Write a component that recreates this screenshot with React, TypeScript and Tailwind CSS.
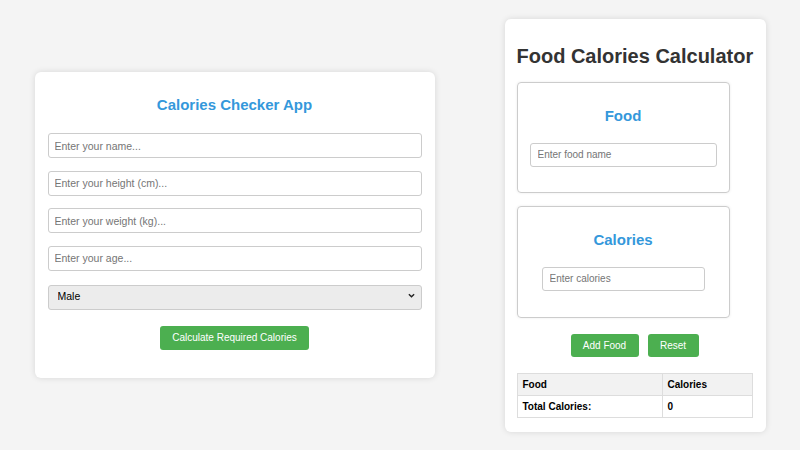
const App = () => {
  return (
    <div className="min-h-screen w-full bg-[#f4f4f4] flex items-center justify-center gap-[70px] font-['Liberation_Sans',Arial,sans-serif]">
      <div className="w-[400px] bg-white rounded-[6px] shadow-[0_0_6px_rgba(0,0,0,0.12)] px-[13px] pt-[22px] pb-[28px]">
        <h1 className="text-center text-[15px] font-bold text-[#3498db] leading-[22px]">Calories Checker App</h1>
        <div className="mt-[17px] flex flex-col gap-[12.5px]">
          {["Enter your name...", "Enter your height (cm)...", "Enter your weight (kg)...", "Enter your age..."].map((p) => (
            <input
              key={p}
              placeholder={p}
              className="w-full h-[25px] px-[6px] text-[10.5px] text-[#333] placeholder:text-[#757575] bg-white border border-[#ccc] rounded-[3px] outline-none"
            />
          ))}
          <div className="relative">
            <select className="w-full h-[25px] pl-[9px] text-[10.5px] text-black bg-[#ececec] border border-[#ccc] rounded-[3px] appearance-none outline-none">
              <option>Male</option>
              <option>Female</option>
            </select>
            <svg className="absolute right-[7px] top-[10px] w-[7px] h-[5px]" viewBox="0 0 8 5">
              <path d="M1 1l3 3 3-3" fill="none" stroke="#222" strokeWidth="1.6" />
            </svg>
          </div>
        </div>
        <div className="mt-[16px] flex justify-center">
          <button className="h-[24px] w-[149px] bg-[#4caf50] text-white text-[10px] rounded-[3px]">Calculate Required Calories</button>
        </div>
      </div>

      <div className="w-[261px] bg-white rounded-[6px] shadow-[0_0_6px_rgba(0,0,0,0.12)] pl-[12px] pr-[13px] pt-[24px] pb-[14px]">
        <h1 className="text-[20px] font-bold text-[#333] leading-[26px] whitespace-nowrap">Food Calories Calculator</h1>
        <div className="mt-[13px] w-[213px] h-[111px] border border-[#ccc] rounded-[4px] shadow-[0_0_3px_rgba(0,0,0,0.08)] flex flex-col items-center pt-[23px]">
          <h2 className="text-[15px] font-bold text-[#3498db] leading-[20px]">Food</h2>
          <input
            placeholder="Enter food name"
            className="mt-[17px] w-[187px] h-[24px] px-[7px] text-[10px] placeholder:text-[#757575] border border-[#ccc] rounded-[3px] outline-none"
          />
        </div>
        <div className="mt-[13px] w-[213px] h-[112px] border border-[#ccc] rounded-[4px] shadow-[0_0_3px_rgba(0,0,0,0.08)] flex flex-col items-center pt-[23px]">
          <h2 className="text-[15px] font-bold text-[#3498db] leading-[20px]">Calories</h2>
          <input
            placeholder="Enter calories"
            className="mt-[17px] w-[163px] h-[24px] px-[7px] text-[10px] placeholder:text-[#757575] border border-[#ccc] rounded-[3px] outline-none"
          />
        </div>
        <div className="mt-[16px] flex justify-center gap-[9px] w-[236px]">
          <button className="h-[23px] w-[68px] bg-[#4caf50] text-white text-[10px] rounded-[3px]">Add Food</button>
          <button className="h-[23px] w-[51px] bg-[#4caf50] text-white text-[10px] rounded-[3px]">Reset</button>
        </div>
        <table className="mt-[16px] w-[236px] border-collapse text-[10px] font-bold text-black">
          <thead>
            <tr className="bg-[#f2f2f2]">
              <th className="h-[22px] w-[145px] border border-[#ddd] px-[5px] text-left">Food</th>
              <th className="h-[22px] border border-[#ddd] px-[5px] text-left">Calories</th>
            </tr>
          </thead>
          <tbody>
            <tr>
              <td className="h-[22px] border border-[#ddd] px-[5px]">Total Calories:</td>
              <td className="h-[22px] border border-[#ddd] px-[5px]">0</td>
            </tr>
          </tbody>
        </table>
      </div>
    </div>
  );
};

export default App;
